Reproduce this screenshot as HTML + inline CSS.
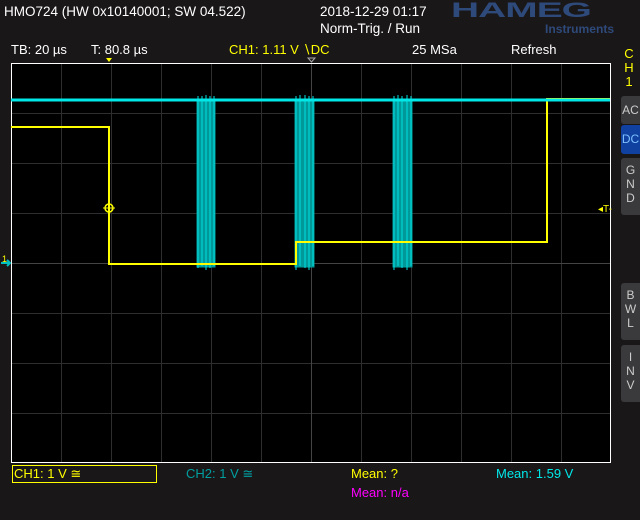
<!DOCTYPE html>
<html><head><style>
body{margin:0;width:640px;height:520px;background:#1a1719;overflow:hidden;font-family:"Liberation Sans",sans-serif;position:relative}
.t{position:absolute;font-size:13px;color:#fff;white-space:nowrap}
.btn{position:absolute;left:621px;width:19px;background:#3a3a3c;border-radius:3px 0 0 3px;color:#ccc;font-size:12px;text-align:center;line-height:14px}
</style></head><body>
<div class="t" style="left:4px;top:4px;font-size:13.5px">HMO724 (HW 0x10140001; SW 04.522)</div>
<div class="t" style="left:320px;top:4px;font-size:13.5px">2018-12-29 01:17</div>
<div class="t" style="left:320px;top:21px;font-size:13.5px">Norm-Trig. / Run</div>
<div style="position:absolute;left:451px;top:0px;font:bold 21px 'Liberation Sans',sans-serif;color:#2e4a7a;transform:scaleX(1.85);transform-origin:left;line-height:21px;letter-spacing:-0.5px">HAMEG</div>
<div style="position:absolute;left:545px;top:24px;font:bold 11.5px 'Liberation Sans',sans-serif;color:#2e4a7a;transform:scaleX(1.05);transform-origin:left">Instruments</div>
<div class="t" style="left:11px;top:42px">TB: 20 µs</div>
<div class="t" style="left:91px;top:42px">T: 80.8 µs</div>
<div class="t" style="left:229px;top:42px;color:#ffff00">CH1: 1.11 V ∖DC</div>
<div class="t" style="left:412px;top:42px">25 MSa</div>
<div class="t" style="left:511px;top:42px">Refresh</div>
<div class="t" style="left:624px;top:47px;color:#ffff00;line-height:14px;text-align:center;width:10px">C<br>H<br>1</div>
<div class="btn" style="top:96px;height:28px;line-height:28px">AC</div>
<div class="btn" style="top:125px;height:29px;line-height:29px;background:#1040a0;color:#7bc0ff">DC</div>
<div class="btn" style="top:158px;padding-top:5px;height:52px">G<br>N<br>D</div>
<div class="btn" style="top:283px;height:52px;padding-top:5px">B<br>W<br>L</div>
<div class="btn" style="top:345px;height:52px;padding-top:5px">I<br>N<br>V</div>
<svg style="position:absolute;left:0;top:0" width="640" height="520">
<rect x="11" y="63" width="600" height="400" fill="#000"/>
<g stroke="#2e2e2e" stroke-width="1">
<path d="M61.5 63V463M111.5 63V463M161.5 63V463M211.5 63V463M261.5 63V463M361.5 63V463M411.5 63V463M461.5 63V463M511.5 63V463M561.5 63V463"/>
<path d="M11 113.5H611M11 163.5H611M11 213.5H611M11 313.5H611M11 363.5H611M11 413.5H611"/>
<path d="M311.5 63V463M11 263.5H611" stroke="#444"/>
</g>
<rect x="11.5" y="63.5" width="599" height="399" fill="none" stroke="#fff"/>
<path d="M106 58h6l-3 4z" fill="#ff0"/>
<path d="M308 58h7l-3.5 4z" fill="none" stroke="#aaa"/>
<g stroke="#00a0a0" fill="#009898">
<rect x="197" y="99" width="18" height="168"/>
<rect x="295" y="99" width="19" height="168"/>
<rect x="393" y="99" width="19" height="168"/>
</g>
<g stroke="#00e0e0" stroke-width="1">
<path d="M198 96V268M202 96V266M206 95V270M210 96V268M214 96V266M296 96V270M300 95V266M305 95V268M309 96V270M313 96V266M394 96V270M398 95V266M402 96V268M407 95V270M411 96V266"/>
</g>
<path d="M11 127H109V264H296V242H547V99H610" fill="none" stroke="#ffff00" stroke-width="2"/>
<path d="M11 100H610" stroke="#00e8e8" stroke-width="3"/>
<circle cx="109" cy="208" r="4" fill="none" stroke="#ff0" stroke-width="1.5"/>
<path d="M103 208h12M109 202v12" stroke="#ff0"/>
<text x="598" y="212" font-size="10" fill="#ff0" font-family="Liberation Sans">◂T-</text>
<path d="M1 263H10M7 260l3 3-3 3" stroke="#00c0c0" stroke-width="2" fill="none"/>
<text x="2" y="262" font-size="9" fill="#ff0" font-family="Liberation Sans">1</text>
<rect x="12.5" y="465.5" width="144" height="17" fill="none" stroke="#ff0"/>
</svg>
<div class="t" style="left:14px;top:466px;color:#ff0">CH1: 1 V ≅</div>
<div class="t" style="left:186px;top:466px;color:#009fa0">CH2: 1 V ≅</div>
<div class="t" style="left:351px;top:466px;color:#ff0">Mean: ?</div>
<div class="t" style="left:496px;top:466px;color:#00e8e8">Mean: 1.59 V</div>
<div class="t" style="left:351px;top:485px;color:#ff00ff">Mean: n/a</div>
</body></html>
